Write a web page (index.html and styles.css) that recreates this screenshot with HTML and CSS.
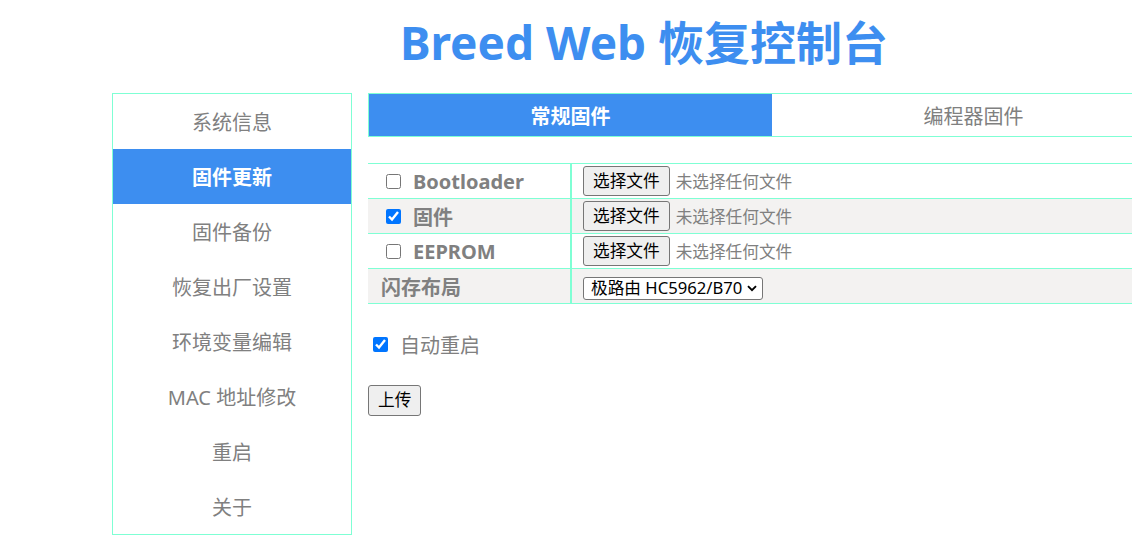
FILE: index.html
```html
<!DOCTYPE html>
<html lang="zh-CN">
<head>
<meta charset="utf-8">
<title>Breed Web 恢复控制台</title>
<link rel="stylesheet" href="styles.css">
</head>
<body>
<div class="page">
  <h1 class="title">Breed Web 恢复控制台</h1>
  <div class="layout">
    <nav class="sidebar">
      <div class="nav-item">系统信息</div>
      <div class="nav-item active">固件更新</div>
      <div class="nav-item">固件备份</div>
      <div class="nav-item">恢复出厂设置</div>
      <div class="nav-item">环境变量编辑</div>
      <div class="nav-item">MAC 地址修改</div>
      <div class="nav-item">重启</div>
      <div class="nav-item">关于</div>
    </nav>
    <main class="main">
      <div class="tabs">
        <div class="tab active">常规固件</div>
        <div class="tab">编程器固件</div>
      </div>
      <div class="form-table">
        <div class="row">
          <div class="cell-label"><input type="checkbox" class="chk"><span class="label-text">Bootloader</span></div>
          <div class="cell-value"><button class="btn file-btn">选择文件</button><span class="file-name">未选择任何文件</span></div>
        </div>
        <div class="row alt">
          <div class="cell-label"><input type="checkbox" class="chk" checked><span class="label-text">固件</span></div>
          <div class="cell-value"><button class="btn file-btn">选择文件</button><span class="file-name">未选择任何文件</span></div>
        </div>
        <div class="row">
          <div class="cell-label"><input type="checkbox" class="chk"><span class="label-text">EEPROM</span></div>
          <div class="cell-value"><button class="btn file-btn">选择文件</button><span class="file-name">未选择任何文件</span></div>
        </div>
        <div class="row alt">
          <div class="cell-label plain"><span class="label-text">闪存布局</span></div>
          <div class="cell-value">
            <div class="select-wrap">
              <select class="select"><option>极路由 HC5962/B70</option></select>
              <svg class="chevron" width="10" height="7" viewBox="0 0 10 7"><path d="M1 1.2 L5 5.2 L9 1.2" fill="none" stroke="#000" stroke-width="1.9"/></svg>
            </div>
          </div>
        </div>
      </div>
      <div class="auto">
        <input type="checkbox" class="chk" checked><span class="auto-text">自动重启</span>
      </div>
      <div class="actions">
        <button class="btn upload-btn">上传</button>
      </div>
    </main>
  </div>
</div>
</body>
</html>
```

FILE: styles.css
```css
html {
  overflow: hidden;
}
body {
  margin: 0;
  background: #fff;
  font-family: "Noto Sans", "Noto Sans CJK SC", sans-serif;
  color: #808080;
}
.page {
  margin-left: 112px;
  width: 1064px;
}
.title {
  margin: 12px 0 21px;
  height: 60px;
  line-height: 60px;
  font-size: 46px;
  font-weight: 700;
  color: #3d8ef0;
  text-align: center;
  white-space: nowrap;
}
.layout {
  display: flex;
  align-items: flex-start;
  gap: 16px;
}
.sidebar {
  width: 240px;
  flex: none;
  box-sizing: border-box;
  border: 1px solid #7fffd4;
}
.nav-item {
  height: 55px;
  line-height: 57px;
  overflow: hidden;
  text-align: center;
  font-size: 20px;
  color: #808080;
}
.nav-item.active {
  background: #3d8ef0;
  color: #fff;
  font-weight: 700;
}
.main {
  width: 808px;
  flex: none;
}
.tabs {
  display: flex;
  border: 1px solid #7fffd4;
}
.tab {
  flex: 1;
  height: 42px;
  line-height: 46px;
  overflow: hidden;
  text-align: center;
  font-size: 20px;
  color: #808080;
}
.tab.active {
  background: #3d8ef0;
  color: #fff;
  font-weight: 700;
}
.form-table {
  margin-top: 26px;
  border-top: 1px solid #7fffd4;
}
.row {
  display: grid;
  grid-template-columns: 204px 1fr;
  height: 35px;
  box-sizing: border-box;
  border-bottom: 1px solid #7fffd4;
}
.row.alt {
  background: #f3f2f1;
}
.cell-label {
  display: flex;
  align-items: center;
  padding-left: 13px;
  border-right: 2px solid #7fffd4;
}
.chk {
  width: 15px;
  height: 15px;
  margin: 0 12px 0 5px;
  flex: none;
}
.label-text {
  font-size: 20px;
  font-weight: 700;
  color: #808080;
  white-space: nowrap;
}
.cell-value {
  display: flex;
  align-items: center;
  padding-left: 11px;
}
.btn {
  font-family: "Noto Sans", "Noto Sans CJK SC", sans-serif;
  font-size: 16.67px;
  color: #000;
  background: #efefef;
  border: 1px solid #767676;
  border-radius: 3px;
  padding: 0 9px;
  line-height: 1;
}
.file-btn {
  height: 30px;
}
.file-name {
  margin-left: 6px;
  font-size: 16.67px;
  color: #808080;
  white-space: nowrap;
}
.select-wrap {
  position: relative;
  display: flex;
  margin-top: 5px;
}
.select {
  appearance: none;
  -webkit-appearance: none;
  width: 180px;
  height: 23px;
  padding: 0 0 0 7px;
  font-family: "Noto Sans", "Noto Sans CJK SC", sans-serif;
  font-size: 16.67px;
  color: #000;
  background: #fff;
  border: 1px solid #767676;
  border-radius: 3px;
  line-height: 1;
}
.chevron {
  position: absolute;
  right: 6px;
  top: 8px;
}
.auto {
  display: flex;
  align-items: center;
  height: 20px;
  margin-top: 30px;
}
.auto-text {
  font-size: 20px;
  color: #808080;
}
.actions {
  margin-top: 31px;
}
.upload-btn {
  height: 31px;
}
```
